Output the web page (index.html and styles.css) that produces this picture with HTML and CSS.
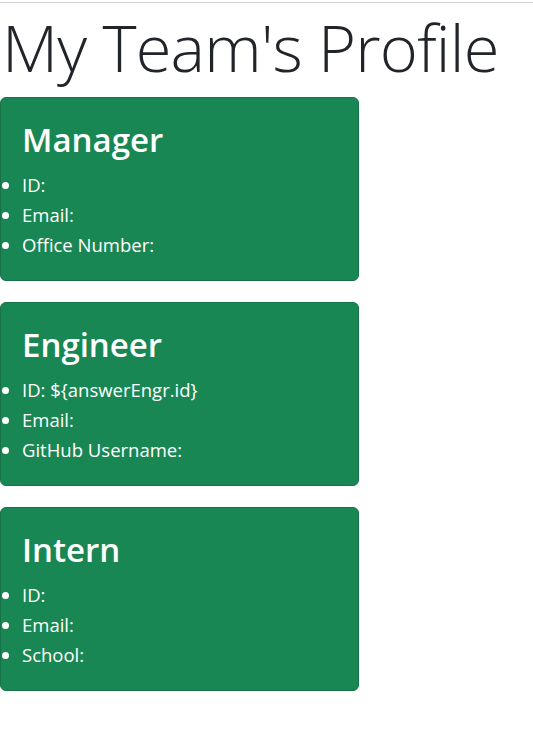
FILE: index.html
```html
<!DOCTYPE html>
<html lang="en">
<head>
<meta charset="utf-8">
<title>My Team's Profile</title>
<link rel="stylesheet" href="styles.css">
</head>
<body>
<hr class="rule">
<h1 class="page-title">My Team's Profile</h1>
<main class="team">
  <section class="card">
    <h2 class="card-title">Manager</h2>
    <ul class="card-list">
      <li>ID:</li>
      <li>Email:</li>
      <li>Office Number:</li>
    </ul>
  </section>
  <section class="card">
    <h2 class="card-title">Engineer</h2>
    <ul class="card-list">
      <li>ID: ${answerEngr.id}</li>
      <li>Email:</li>
      <li>GitHub Username:</li>
    </ul>
  </section>
  <section class="card">
    <h2 class="card-title">Intern</h2>
    <ul class="card-list">
      <li>ID:</li>
      <li>Email:</li>
      <li>School:</li>
    </ul>
  </section>
</main>
</body>
</html>
```
FILE: styles.css
```css
html, body {
  margin: 0;
  padding: 0;
  background: #ffffff;
}

body {
  font-family: "Open Sans", "Noto Sans", sans-serif;
  color: #212529;
}

.rule {
  margin: 2px 0 0;
  border: 0;
  border-top: 1px solid #d3d3d3;
  height: 0;
}

.page-title {
  margin: 0;
  font-size: 65px;
  font-weight: 300;
  line-height: 88px;
  padding-left: 2px;
  letter-spacing: -0.8px;
}

.team {
  display: flex;
  flex-direction: column;
  gap: 21px;
  align-items: flex-start;
  margin-top: 6px;
}

.card {
  width: 359px;
  box-sizing: border-box;
  height: 184px;
  background: #198754;
  border: 1px solid #157347;
  border-radius: 6px;
  color: #ffffff;
}

.card-title {
  margin: 0;
  padding: 19px 0 0 21px;
  font-size: 33px;
  font-weight: 600;
  line-height: 46px;
}

.card-list {
  margin: 7px 0 0;
  padding-left: 21px;
  font-size: 18.5px;
  line-height: 30px;
}
```
